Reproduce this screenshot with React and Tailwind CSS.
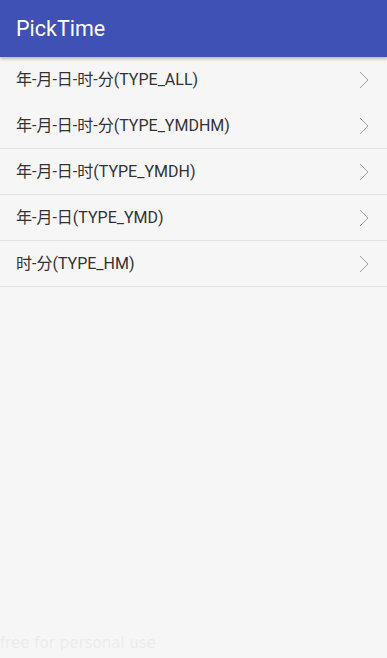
import React from "react";

const items = [
  "年-月-日-时-分(TYPE_ALL)",
  "年-月-日-时-分(TYPE_YMDHM)",
  "年-月-日-时(TYPE_YMDH)",
  "年-月-日(TYPE_YMD)",
  "时-分(TYPE_HM)",
];

function Chevron() {
  return (
    <svg width="10" height="18" viewBox="0 0 10 18" className="shrink-0">
      <path d="M1 1 L9 9 L1 17" fill="none" stroke="#9e9e9e" strokeWidth="1" />
    </svg>
  );
}

export default function App() {
  return (
    <div
      className="w-[387px] h-[658px] bg-[#f6f6f6] flex flex-col overflow-hidden relative"
      style={{ fontFamily: 'Roboto, "Noto Sans CJK SC", sans-serif' }}
    >
      <div className="h-[57px] bg-[#3f51b5] flex items-center px-4 shadow-[0_2px_3px_rgba(0,0,0,0.25)] z-10 shrink-0">
        <span className="text-white text-[21.5px] leading-none">PickTime</span>
      </div>
      <div className="flex flex-col">
        {items.map((t, i) => (
          <div
            key={i}
            className={
              "h-[46px] flex items-center justify-between pl-4 pr-[18px] " +
              (i > 0 ? "border-b border-[#e2e2e2]" : "")
            }
          >
            <span className="text-[16px] text-[#333333]">{t}</span>
            <Chevron />
          </div>
        ))}
      </div>
      <div className="flex-1" />
      <div className="h-[22px] flex items-start shrink-0">
        <span
          className="text-[15px] leading-none text-[#ececec]"
          style={{ fontFamily: '"DejaVu Sans", sans-serif' }}
        >
          free for personal use
        </span>
      </div>
    </div>
  );
}
